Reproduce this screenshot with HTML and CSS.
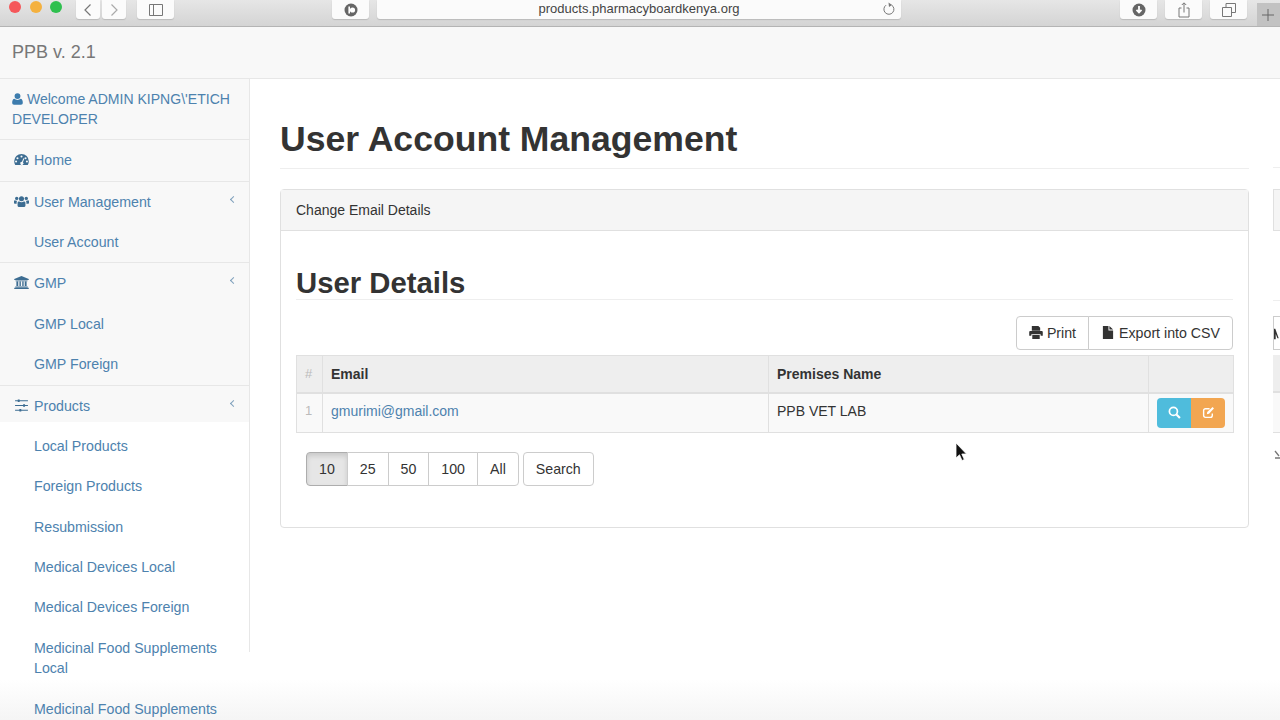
FILE: index.html
```html
<!DOCTYPE html>
<html>
  <head>
    <title>PPB v. 2.1</title>
    <link rel="stylesheet" href="styles.css">
  </head>
  <body>
    <div class="safari-bar">
      <div class="lights">
        <span class="light red"></span>
        <span class="light yellow"></span>
        <span class="light green"></span>
      </div>
      <div class="tool-group">
        <span class="tool tool-back"><svg viewBox="0 0 12 16" width="12" height="16"><path d="M8.500 2.500 3 8l5.500 5.500" fill="none" stroke="#777" stroke-width="1.200"/></svg></span>
        <span class="tool tool-back"><svg viewBox="0 0 12 16" width="12" height="16"><path d="M3.500 2.500 9 8l-5.500 5.500" fill="none" stroke="#aaa" stroke-width="1.200"/></svg></span>
      </div>
      <span class="tool tool-side"><svg viewBox="0 0 14 12" width="14" height="12"><path d="M.5.500h13v11H.5zM4.500.5v11" fill="none" stroke="#777"/></svg></span>
      <span class="tool tool-ext"><svg viewBox="0 0 16 16" width="16" height="16"><circle cx="8" cy="8" r="6.500" fill="#666"/><path d="M6.200 4.500v7" stroke="#fff" stroke-width="1.600"/><circle cx="9.500" cy="8" r="2.600" fill="#fff"/></svg></span>
      <div class="address">
        <span class="url">products.pharmacyboardkenya.org</span>
        <svg class="reload" viewBox="0 0 14 14" width="14" height="14"><path d="M9.500 3A5 5 0 1 1 4 3.200" fill="none" stroke="#777"/><path d="M6.500 .5 10 3 7 5z" fill="#777"/></svg>
      </div>
      <span class="tool tool-right tool-first"><svg viewBox="0 0 14 14" width="14" height="14"><circle cx="7" cy="7" r="6.500" fill="#666"/><path d="M7 3v6M4.500 6.800 7 9.500l2.500-2.700" fill="none" stroke="#fff" stroke-width="1.800"/></svg></span>
      <span class="tool tool-right"><svg viewBox="0 0 12 16" width="12" height="16"><path d="M3.500 6H1v9h10V6H8.500M6 10.500V1M3.800 3 6 .8 8.200 3" fill="none" stroke="#777"/></svg></span>
      <span class="tool tool-right"><svg viewBox="0 0 14 14" width="14" height="14"><path d="M.5 4.500h9v9h-9zM4 4.500V.5h9.500v9H9.500" fill="none" stroke="#777"/></svg></span>
      <span class="new-tab"><svg viewBox="0 0 12 12" width="12" height="12"><path d="M6 0v12M0 6h12" stroke="#666"/></svg></span>
    </div>

    <nav class="navbar">
      <a class="brand">PPB v. 2.1</a>
    </nav>

    <div class="page">
      <aside class="sidebar">
        <ul class="side-menu">
          <li class="welcome">
            <a><svg class="ico-small" viewBox="0 0 12 13"><path d="M6 6.500a3.200 3.200 0 1 0 0-6.400 3.200 3.200 0 0 0 0 6.400zM2.700 6.200C1 6.400.2 8 .2 10.500c0 1.300.8 2.200 2 2.200h7.600c1.200 0 2-.9 2-2.200 0-2.500-.8-4.100-2.500-4.300-.8.800-2 1.300-3.300 1.300s-2.500-.5-3.300-1.300z"/></svg> Welcome ADMIN KIPNG\'ETICH DEVELOPER</a>
          </li>
          <li>
            <a><svg class="ico" viewBox="0 0 16 13"><path fill-rule="evenodd" d="M8 .5a7.800 7.800 0 0 0-7.800 7.800c0 1.500.4 2.900 1.100 4.100h13.400c.7-1.200 1.100-2.600 1.100-4.100A7.800 7.800 0 0 0 8 .500zM8 2.200a1.100 1.100 0 1 1 0 2.200 1.100 1.100 0 0 1 0-2.200zM3.700 4a1.100 1.100 0 1 1 0 2.200 1.100 1.100 0 0 1 0-2.200zM12.300 4a1.100 1.100 0 1 1 0 2.200 1.100 1.100 0 0 1 0-2.200zM2.200 7.500a1.100 1.100 0 1 1 0 2.200 1.100 1.100 0 0 1 0-2.200zM13.800 7.500a1.100 1.100 0 1 1 0 2.200 1.100 1.100 0 0 1 0-2.200zM10 5.200l1 .5-1.500 3.700a1.700 1.700 0 1 1-1-.4z"/></svg>Home</a>
          </li>
          <li>
            <a class="has-arrow"><svg class="ico" viewBox="0 0 16 12"><circle cx="8" cy="3" r="2.700"/><circle cx="2.900" cy="2.700" r="1.800"/><circle cx="13.100" cy="2.700" r="1.800"/><path d="M3.800 7.500C3.800 6.400 4.600 6 5.500 6c.7.500 1.600.8 2.500.8s1.800-.3 2.500-.8c.9 0 1.700.4 1.700 1.500v2.700c0 1-.7 1.600-1.600 1.600H5.400c-.9 0-1.600-.6-1.600-1.600z"/><path d="M0 5.800C0 5 .5 4.600 1.200 4.600c.5.400 1 .5 1.700.5.400 0 .7 0 1-.2-.3.500-.9.600-1.100 1.500v2H.9C.3 8.400 0 8 0 7.500zM16 5.800c0-.8-.5-1.200-1.200-1.200-.500.4-1 .5-1.700.5-.4 0-.7 0-1-.2.300.500.9.600 1.100 1.500v2h1.900c.6 0 .9-.4.900-.9z"/></svg>User Management<span class="arrow"></span></a>
            <ul class="sub-menu">
              <li><a>User Account</a></li>
            </ul>
          </li>
          <li>
            <a class="has-arrow"><svg class="ico" viewBox="0 0 16 14"><path d="M8 0l7.800 3.200v1H.2v-1zM1.500 4.800h13v.8h-13zM2.500 6h2v4.800h-2zM5.800 6h1.500v4.800H5.800zM8.800 6h1.500v4.800H8.800zM11.500 6h2v4.800h-2zM1.300 11.300h13.400v1H1.300zM.2 12.700h15.600V14H.2z"/></svg>GMP<span class="arrow"></span></a>
            <ul class="sub-menu">
              <li><a>GMP Local</a></li>
              <li><a>GMP Foreign</a></li>
            </ul>
          </li>
          <li class="open">
            <a class="has-arrow"><svg class="ico" viewBox="0 0 14 12"><path d="M1 1.500h12M1 6h12M1 10.500h12" stroke="#3d6d92" stroke-width="1"/><path d="M3.500.300h1.800v2.400H3.500zM8.500 4.800h1.800v2.400H8.500zM5 9.300h1.800v2.400H5z"/></svg>Products<span class="arrow"></span></a>
            <ul class="sub-menu">
              <li><a>Local Products</a></li>
              <li><a>Foreign Products</a></li>
              <li><a>Resubmission</a></li>
              <li><a>Medical Devices Local</a></li>
              <li><a>Medical Devices Foreign</a></li>
              <li><a>Medicinal Food Supplements Local</a></li>
              <li><a>Medicinal Food Supplements</a></li>
            </ul>
          </li>
        </ul>
      </aside>

      <main class="content">
        <h1 class="page-title">User Account Management</h1>
        <section class="panel">
          <div class="panel-heading">Change Email Details</div>
          <div class="panel-body">
            <h2 class="details-title">User Details</h2>
            <div class="export-row">
              <div class="btn-group">
                <button class="btn"><svg class="btn-ico" viewBox="0 0 15 14"><path fill-rule="evenodd" d="M3 0h7l2 2v3H3zM1.500 5.500h12c.8 0 1.300.5 1.300 1.300v3.700h-2.300V9h-10v1.500H.2V6.800c0-.8.5-1.300 1.300-1.300zM3.500 9.800h8V14h-8z"/></svg>Print</button>
                <button class="btn"><svg class="btn-ico" viewBox="0 0 11 14"><path d="M0 0h6v4.800h5V14H0zM7 0l4 3.800H7z"/></svg>Export into CSV</button>
              </div>
            </div>
            <table class="users">
              <thead>
                <tr>
                  <th class="col-num">#</th>
                  <th class="col-email">Email</th>
                  <th class="col-name">Premises Name</th>
                  <th class="col-actions"></th>
                </tr>
              </thead>
              <tbody>
                <tr>
                  <td class="col-num">1</td>
                  <td><a class="link">gmurimi@gmail.com</a></td>
                  <td>PPB VET LAB</td>
                  <td class="col-actions">
                    <div class="action-group">
                      <span class="action info"><svg viewBox="0 0 12 12" width="13" height="13"><circle cx="5" cy="5" r="3.700" fill="none" stroke="#fff" stroke-width="1.600"/><path d="M7.800 7.800 11 11" stroke="#fff" stroke-width="2"/></svg></span>
                      <span class="action warning"><svg viewBox="0 0 12 12" width="13" height="13"><path d="M9.500 7v1.800c0 1-.7 1.700-1.700 1.700H3.200c-1 0-1.700-.7-1.700-1.700V4.200c0-1 .7-1.700 1.700-1.700H7" fill="none" stroke="#fff" stroke-width="1.300"/><path d="M4.800 5.500 9.800 1 11 2.200 6.500 7.200 4.500 7.600z" fill="#fff"/></svg></span>
                    </div>
                  </td>
                </tr>
              </tbody>
            </table>
            <div class="pager-row">
              <div class="btn-group">
                <button class="btn active">10</button>
                <button class="btn">25</button>
                <button class="btn">50</button>
                <button class="btn">100</button>
                <button class="btn">All</button>
              </div>
              <button class="btn solo">Search</button>
            </div>
          </div>
        </section>
      </main>

      <!-- next slide just showing at the right edge -->
      <div class="peek">
        <div class="peek-rule peek-title"></div>
        <div class="peek-heading"></div>
        <div class="peek-rule peek-sub"></div>
        <div class="peek-btn"><svg viewBox="0 0 7 14" width="7" height="14"><path d="M0 1h1.500l4 11H4L2 7v6H0z" fill="#333"/></svg></div>
        <div class="peek-head"></div>
        <div class="peek-row"></div>
        <svg class="peek-mark" viewBox="0 0 7 10" width="7" height="10"><path d="M1 1l4 5M1 8h5" stroke="#777" stroke-width="1.300"/></svg>
      </div>
    </div>

    <svg class="cursor" viewBox="0 0 12 18" width="12" height="18"><path d="M1 0v15l3.500-3.200L7 17.500l2.300-1-2.500-5.500h4.700z" fill="#111" stroke="#fff" stroke-width=".8"/></svg>
    <div class="bottom-fade"></div>
  </body>
</html>
```

FILE: styles.css
```css
:root {
  --link-color: #4d82ae;
  --text-color: #333;
  --border-color: #e0e0e0;
  --nav-color: #f8f8f8;
}

html, body {
  margin: 0;
  height: 720px;
  overflow: hidden;
}

body {
  background: #fff;
  font-family: "Liberation Sans", Arial, sans-serif;
  font-size: 14px;
  line-height: 20.3px;
  color: var(--text-color);
  position: relative;
}

ul {
  list-style: none;
  margin: 0;
  padding: 0;
}

/* browser chrome */
.safari-bar {
  height: 26px;
  display: flex;
  align-items: flex-start;
  background: linear-gradient(#e6e6e6, #d4d4d4);
  border-bottom: 1px solid #b4b4b4;
}

.lights {
  display: flex;
  gap: 8.500px;
  margin: 1px 0 0 9px;
}

.light {
  width: 12px;
  height: 12px;
  border-radius: 50%;
}

.red { background: #f5575a; }
.yellow { background: #f4b13f; }
.green { background: #2fc04f; }

.tool-group {
  display: flex;
  gap: 2px;
  margin-left: 14px;
}

.tool {
  height: 19px;
  background: #fbfbfb;
  border-radius: 0 0 3px 3px;
  box-shadow: 0 1px 1px #bbb;
  display: flex;
  align-items: center;
  justify-content: center;
}

.tool-back { width: 24px; }
.tool-side { width: 37px; margin-left: 11px; }
.tool-ext { width: 37px; margin-left: 158px; }
.tool-right { width: 37px; margin-left: 8px; }
.tool-first { margin-left: 219px; }

.address {
  width: 524px;
  height: 19px;
  margin-left: 8px;
  background: #fbfbfb;
  border-radius: 0 0 3px 3px;
  box-shadow: 0 1px 1px #bbb;
  display: flex;
  align-items: center;
  justify-content: center;
  position: relative;
  font-size: 13px;
  color: #444;
}

.reload {
  position: absolute;
  right: 5px;
  top: 2px;
}

.new-tab {
  height: 23px;
  margin: 3px 0 0 10px;
  padding-left: 5px;
  background: #c2c2c2;
  flex: 1;
  display: flex;
  align-items: center;
}

/* top navbar */
.navbar {
  height: 51px;
  background: var(--nav-color);
  border-bottom: 1px solid #e7e7e7;
  display: flex;
  align-items: center;
  padding-left: 12px;
}

.brand {
  font-size: 18px;
  color: #777;
}

.page {
  display: flex;
  height: 641px;
}

/* sidebar */
.sidebar {
  width: 249px;
  height: 573px;
  flex-shrink: 0;
  border-right: 1px solid #e7e7e7;
  font-size: 14.2px;
  line-height: 20.38px;
}

.side-menu > li {
  background: var(--nav-color);
  border-bottom: 1px solid #e7e7e7;
}

.side-menu a {
  display: block;
  padding: 10px 12px 10px 14px;
  color: var(--link-color);
}

.side-menu .welcome a {
  padding: 10px 12px 9.500px;
  font-size: 14.050px;
}

.side-menu .open {
  background: none;
  border-bottom: none;
}

.side-menu .open > a {
  background: var(--nav-color);
  padding-bottom: 6px;
}

.side-menu .open .sub-menu {
  padding-top: 4px;
}

.has-arrow {
  position: relative;
}

.arrow {
  position: absolute;
  right: 13px;
  top: 15px;
  width: 4px;
  height: 4px;
  border-left: 1px solid #7d9fbb;
  border-bottom: 1px solid #7d9fbb;
  transform: rotate(45deg);
}

.ico {
  width: 15px;
  height: 13px;
  margin-right: 5px;
  fill: #3d6d92;
  vertical-align: -1px;
}

.ico-small {
  width: 11px;
  height: 12px;
  fill: #3d7cad;
  vertical-align: -1px;
}

.side-menu .sub-menu a {
  padding-left: 34px;
  padding-right: 30px;
}

/* main area */
.content {
  width: 969px;
  flex-shrink: 0;
  padding-left: 30px;
}

.page-title {
  font-size: 35.600px;
  line-height: 40px;
  font-weight: bold;
  margin: 40px 0 20px;
  padding-bottom: 9px;
  border-bottom: 1px solid #eee;
}

.panel {
  border: 1px solid var(--border-color);
  border-radius: 4px;
}

.panel-heading {
  background: #f5f5f5;
  border-bottom: 1px solid var(--border-color);
  padding: 10px 15px;
}

.panel-body {
  padding: 15px 15px 41px;
}

.details-title {
  font-size: 29.300px;
  line-height: 33px;
  font-weight: bold;
  margin: 20px 0 16px;
  border-bottom: 1px solid #eee;
}

.export-row {
  display: flex;
  justify-content: flex-end;
  margin-bottom: 5px;
}

.btn-group {
  display: inline-flex;
}

.btn {
  font: inherit;
  font-size: 14.200px;
  color: var(--text-color);
  background: #fff;
  border: 1px solid #ccc;
  padding: 6px 12px;
  height: 34px;
  margin-left: -1px;
}

.btn-group .btn:first-child {
  border-radius: 4px 0 0 4px;
  margin-left: 0;
}

.btn-group .btn:last-child {
  border-radius: 0 4px 4px 0;
}

.btn.active {
  background: #e6e6e6;
  border-color: #adadad;
  box-shadow: inset 0 3px 5px rgba(0, 0, 0, 0.125);
}

.btn.solo {
  border-radius: 4px;
  margin-left: 4px;
}

.btn-ico {
  width: 14px;
  height: 13px;
  margin-right: 4px;
  fill: var(--text-color);
  vertical-align: -1px;
}

/* table */
.users {
  width: 937px;
  border-collapse: collapse;
  table-layout: fixed;
}

.users th, .users td {
  box-sizing: border-box;
  border: 1px solid var(--border-color);
  padding: 0 8px;
  text-align: left;
}

.users th {
  background: #eee;
  border-bottom-width: 2px;
  height: 37px;
}

.users td {
  background: #f9f9f9;
  height: 40px;
  padding-bottom: 3px;
}

.users .col-num {
  width: 26px;
  color: #bbb;
  font-weight: normal;
  font-size: 13px;
}

.col-email { width: 446px; }
.col-name { width: 380px; }

.users .col-actions {
  width: 85px;
  padding: 0 8px 1px;
}

.link {
  color: var(--link-color);
}

.action-group {
  display: flex;
}

.action {
  width: 34px;
  height: 30px;
  display: flex;
  align-items: center;
  justify-content: center;
}

.info {
  background: #4fbcdc;
  border-radius: 4px 0 0 4px;
}

.warning {
  background: #f2a651;
  border-radius: 0 4px 4px 0;
}

.pager-row {
  display: flex;
  padding: 19px 10px 0;
}

/* right edge */
.peek {
  width: 7px;
  margin-left: 24px;
  flex-shrink: 0;
}

.peek > div {
  box-sizing: border-box;
}

.peek-rule {
  height: 1px;
  background: #eee;
}

.peek-title { margin-top: 88px; }
.peek-sub { margin-top: 69px; }

.peek-heading {
  margin-top: 21px;
  height: 42px;
  background: #f5f5f5;
  border: 1px solid var(--border-color);
  border-right: none;
}

.peek-btn {
  margin-top: 15px;
  height: 34px;
  padding-top: 10px;
  border: 1px solid #ccc;
  border-right: none;
  display: flex;
}

.peek-head {
  margin-top: 5px;
  height: 38px;
  background: #eee;
  border-bottom: 2px solid var(--border-color);
}

.peek-row {
  height: 40px;
  background: #f9f9f9;
  border-bottom: 1px solid var(--border-color);
}

.peek-mark {
  margin-top: 17px;
  margin-left: 1px;
  display: block;
}

/* overlays */
.cursor {
  position: absolute;
  left: 955px;
  top: 443px;
}

.bottom-fade {
  position: absolute;
  left: 0;
  right: 0;
  bottom: 0;
  height: 40px;
  z-index: -1;
  background: linear-gradient(rgba(245, 245, 245, 0), rgba(238, 238, 238, 0.6));
  pointer-events: none;
}
```
